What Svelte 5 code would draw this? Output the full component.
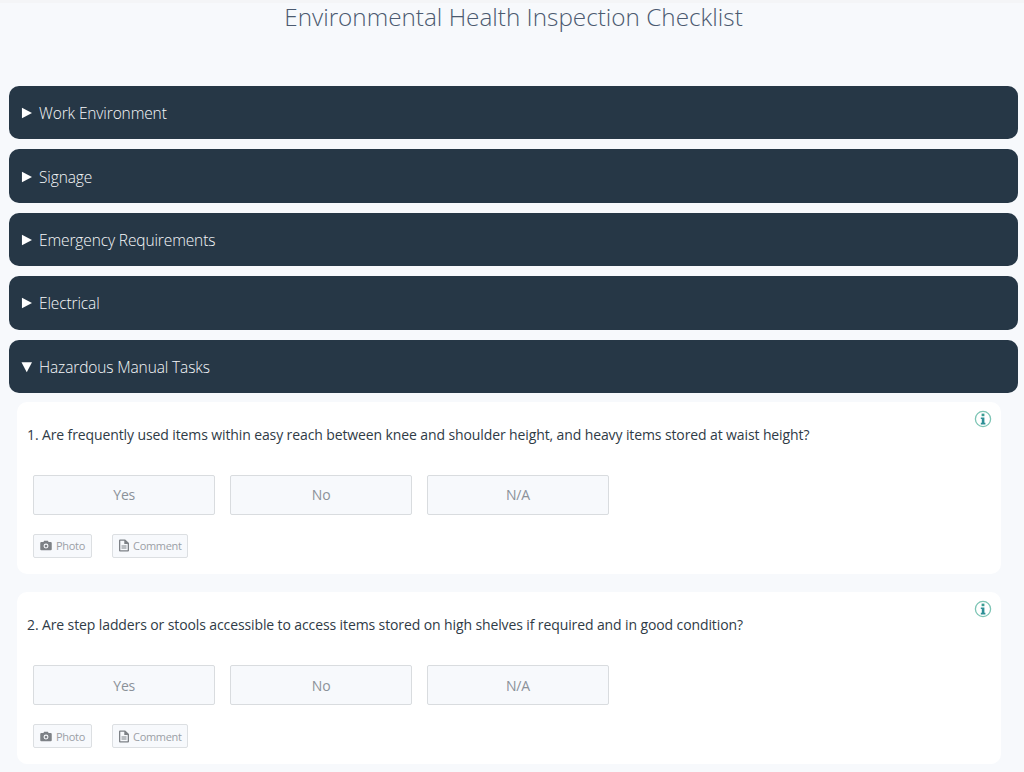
<script>
	const sections = [
		{ title: 'Work Environment', open: false },
		{ title: 'Signage', open: false },
		{ title: 'Emergency Requirements', open: false },
		{ title: 'Electrical', open: false },
		{ title: 'Hazardous Manual Tasks', open: true }
	];

	const questions = [
		'Are frequently used items within easy reach between knee and shoulder height, and heavy items stored at waist height?',
		'Are step ladders or stools accessible to access items stored on high shelves if required and in good condition?'
	];

	const answers = ['Yes', 'No', 'N/A'];
</script>

<div class="page">
	<h1>Environmental Health Inspection Checklist</h1>

	<div class="sections">
		{#each sections as section}
			<div class="bar">
				<svg class="arrow" viewBox="0 0 12 12" aria-hidden="true">
					{#if section.open}
						<path d="M0.5 1h11L6 11.500z" />
					{:else}
						<path d="M1 0.500v11L11.500 6z" />
					{/if}
				</svg>
				<span>{section.title}</span>
			</div>
		{/each}
	</div>

	<div class="questions">
		{#each questions as question, i}
			<div class="card">
				<svg class="info" viewBox="0 0 18 18" aria-hidden="true">
					<circle cx="9" cy="9" r="7.600" />
					<path class="info-dot" d="M7.600 3.600h2.800v2.600H7.600z" />
					<path class="info-stem" d="M6.800 7.400h3.600v5.400h1v1.600H6.800v-1.600h1V9H6.800z" />
				</svg>
				<p class="question">{i + 1}. {question}</p>
				<div class="answers">
					{#each answers as answer}
						<button type="button" class="answer">{answer}</button>
					{/each}
				</div>
				<div class="tools">
					<button type="button" class="tool">
						<svg viewBox="0 0 14 12" aria-hidden="true">
							<path fill-rule="evenodd" d="M1.500 2H4l.8-1.500h4.400L10 2h2.500a1.200 1.200 0 0 1 1.200 1.200v7.100a1.200 1.200 0 0 1-1.200 1.200h-11a1.200 1.200 0 0 1-1.200-1.200V3.200A1.200 1.200 0 0 1 1.500 2zM7 3.700a2.900 2.900 0 1 0 0 5.800 2.900 2.900 0 0 0 0-5.800zM7 5a1.600 1.600 0 1 1 0 3.200A1.600 1.600 0 0 1 7 5z" />
						</svg>
						Photo
					</button>
					<button type="button" class="tool">
						<svg class="doc" viewBox="0 0 10 12" aria-hidden="true">
							<path fill-rule="evenodd" d="M1 0h5.200L10 3.600V11a1 1 0 0 1-1 1H1a1 1 0 0 1-1-1V1a1 1 0 0 1 1-1zM1.300 1.300v9.400h7.400V4.600H5.300V1.300zM2.500 6h5v1h-5zM2.500 8h5v1h-5z" />
						</svg>
						Comment
					</button>
				</div>
			</div>
		{/each}
	</div>
</div>

<style>
	:global(body) {
		background: #f7f9fc;
		overflow: hidden;
	}

	.page {
		border-top: 3px solid #f4f5f7;
		color: #2f3b46;
		font-family: 'Open Sans', 'Noto Sans', sans-serif;
		height: 769px;
		overflow: hidden;
	}

	h1 {
		color: #4b5a70;
		font-size: 24.300px;
		font-weight: 300;
		line-height: 28px;
		margin: 0 0 55px;
		padding-left: 3px;
		text-align: center;
	}

	.sections {
		display: flex;
		flex-direction: column;
		gap: 10px;
		padding: 0 6px 0 9px;
	}

	.bar {
		align-items: center;
		background: #263746;
		border-radius: 10px;
		box-sizing: border-box;
		color: #f6f8fa;
		display: flex;
		font-size: 15.500px;
		font-weight: 300;
		gap: 7px;
		height: 53.400px;
		letter-spacing: -0.12px;
		padding: 1px 0 0 12px;
	}

	.arrow {
		fill: #fff;
		height: 12px;
		margin-left: -0.5px;
		width: 11.500px;
	}

	.questions {
		display: flex;
		flex-direction: column;
		gap: 18.500px;
		margin-top: 9px;
		padding: 0 23px 0 17px;
	}

	.card {
		background: #fff;
		border-radius: 10px;
		box-sizing: border-box;
		height: 172px;
		padding: 24px 10px 0;
		position: relative;
	}

	.info {
		height: 18px;
		position: absolute;
		right: 9px;
		top: 8px;
		width: 18px;
	}

	.info circle {
		fill: none;
		stroke: #7cc4b4;
		stroke-width: 1.300;
	}

	.info-dot {
		fill: #3a9e92;
	}

	.info-stem {
		fill: #2f8f96;
	}

	.question {
		font-size: 14px;
		letter-spacing: -0.11px;
		line-height: 18px;
		margin: 0;
	}

	.answers {
		display: flex;
		gap: 14.500px;
		margin-top: 31px;
		padding-left: 6px;
	}

	.answer {
		background: #f7f9fc;
		border: 1px solid #d9dcdf;
		border-radius: 2px;
		color: #8b9199;
		font-family: inherit;
		font-size: 14px;
		height: 40px;
		letter-spacing: -0.2px;
		padding: 0;
		width: 182.400px;
	}

	.tools {
		display: flex;
		gap: 20.500px;
		margin-top: 19px;
		padding-left: 6px;
	}

	.tool {
		align-items: center;
		background: #f7f9fc;
		border: 1px solid #dcdfe2;
		border-radius: 2px;
		color: #9ba0a6;
		display: flex;
		font-family: inherit;
		font-size: 11px;
		gap: 4px;
		height: 24px;
		letter-spacing: -0.3px;
		padding: 0 5.500px 0 6px;
	}

	.tool svg {
		fill: #7d8186;
		height: 11px;
		width: 12px;
	}

	.tool .doc {
		height: 13px;
		width: 10px;
	}
</style>
